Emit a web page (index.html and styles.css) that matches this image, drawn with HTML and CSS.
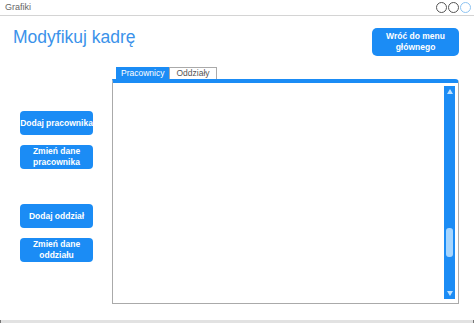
FILE: index.html
```html
<!DOCTYPE html>
<html lang="pl">
<head>
    <meta charset="UTF-8">
    <meta name="viewport" content="width=device-width, initial-scale=1.0">
    <title>Grafiki</title>
    <link rel="stylesheet" href="styles.css">
</head>
<body>
    <div class="window">
        <div class="titlebar">
            <span class="app-name">Grafiki</span>
            <div class="controls">
                <span class="dot"></span>
                <span class="dot"></span>
                <span class="dot dot-active"></span>
            </div>
        </div>

        <div class="header">
            <h1>Modyfikuj kadrę</h1>
            <a href="#" class="btn btn-back">Wróć do menu głównego</a>
        </div>

        <div class="main">
            <div class="actions">
                <a href="#" class="btn btn-side">Dodaj pracownika</a>
                <a href="#" class="btn btn-side">Zmień dane pracownika</a>
                <a href="#" class="btn btn-side btn-group">Dodaj oddział</a>
                <a href="#" class="btn btn-side">Zmień dane oddziału</a>
            </div>

            <div class="tabs-wrap">
                <div class="tabs">
                    <span class="tab active">Pracownicy</span>
                    <span class="tab">Oddziały</span>
                </div>
                <div class="panel">
                    <div class="panel-body"></div>
                    <div class="scrollbar">
                        <span class="arrow up"></span>
                        <span class="track">
                            <span class="thumb"></span>
                        </span>
                        <span class="arrow down"></span>
                    </div>
                </div>
            </div>
        </div>

        <div class="footer"></div>
    </div>
</body>
</html>
```

FILE: styles.css
```css
* {
    margin: 0;
    padding: 0;
    box-sizing: border-box;
}

body {
    font-family: 'Liberation Sans', Arial, sans-serif;
    background: #fff;
    color: #333;
}

.window {
    width: 474px;
    height: 323px;
    display: flex;
    flex-direction: column;
    overflow: hidden;
}

.titlebar {
    height: 16px;
    border-bottom: 1px solid #d4d4d4;
    display: flex;
    align-items: center;
    justify-content: space-between;
    padding: 0 3px 1px 5px;
}

.app-name {
    font-size: 9px;
    color: #666;
}

.controls {
    display: flex;
    gap: 1px;
}

.dot {
    width: 11px;
    height: 11px;
    border: 1px solid #555;
    border-radius: 50%;
}

.dot-active {
    border-color: #8ec4f2;
}

.header {
    display: flex;
    justify-content: space-between;
    align-items: flex-start;
    padding: 12px 15px 0 13px;
}

h1 {
    font-size: 17.5px;
    font-weight: normal;
    color: #3b92ea;
    line-height: 20px;
    margin-top: -1px;
}

.btn {
    display: flex;
    align-items: center;
    justify-content: center;
    text-align: center;
    background: #1b8cf5;
    color: #fff;
    text-decoration: none;
    font-weight: bold;
    font-size: 8.5px;
    line-height: 11px;
    border-radius: 4px;
}

.btn-back {
    width: 87px;
    height: 28px;
    padding: 0 12px;
    border-radius: 5px;
}

.main {
    display: flex;
    margin-top: 11px;
}

.actions {
    width: 112px;
    padding: 44px 0 0 20px;
    display: flex;
    flex-direction: column;
    gap: 10px;
}

.btn-side {
    width: 73px;
    height: 24px;
    padding: 0 8px;
}

.btn-side:first-child {
    padding: 0;
}

.btn-group {
    margin-top: 25px;
}

.tabs-wrap {
    width: 347px;
}

.tabs {
    display: flex;
    padding-left: 4px;
    height: 12px;
}

.tab {
    font-size: 8.5px;
    line-height: 11px;
    padding: 0 6px;
    color: #555;
    border: 1px solid #aaa;
    border-bottom: none;
    background: #fff;
}

.tab.active {
    padding: 0 4px;
    background: #1b8cf5;
    border-color: #1b8cf5;
    color: #fff;
}

.panel {
    height: 225px;
    border: 1px solid #aaa;
    border-top: 4px solid #1b8cf5;
    border-top-right-radius: 4px;
    display: flex;
    padding: 3px 3px 4px 0;
}

.panel-body {
    flex: 1;
}

.scrollbar {
    width: 11px;
    background: #1b8cf5;
    display: flex;
    flex-direction: column;
    align-items: center;
}

.arrow {
    width: 0;
    height: 0;
    border-left: 3px solid transparent;
    border-right: 3px solid transparent;
    margin: 3px 0;
}

.arrow.up {
    border-bottom: 5px solid #bfe2ff;
}

.arrow.down {
    border-top: 5px solid #bfe2ff;
}

.track {
    flex: 1;
    width: 100%;
    display: flex;
    flex-direction: column;
    justify-content: flex-end;
    align-items: center;
    padding-bottom: 31px;
}

.thumb {
    width: 7px;
    height: 29px;
    background: #a6d6ff;
    border-radius: 3px;
}

.footer {
    margin-top: auto;
    height: 3px;
    background: #e2e2e2;
    border-left: 1px solid #777;
    border-right: 1px solid #777;
}
```
